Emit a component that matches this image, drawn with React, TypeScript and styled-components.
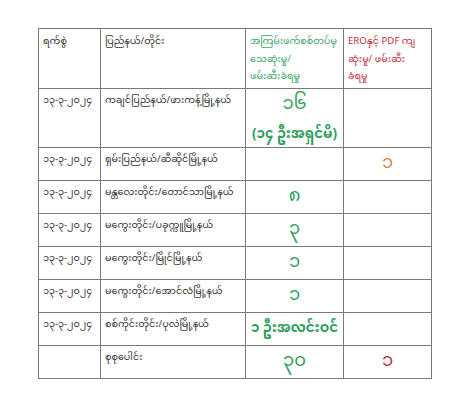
import styled, { createGlobalStyle } from "styled-components";

const GlobalStyle = createGlobalStyle`
  html, body {
    margin: 0;
    padding: 0;
    background: #ffffff;
  }
  body {
    font-family: "Noto Sans Myanmar", "Padauk", "Myanmar Text", "Noto Sans", "DejaVu Sans", sans-serif;
  }
`;

type Row = {
  date: string;
  place: string;
  army?: string;
  armyNote?: string;
  armyBold?: boolean;
  ero?: string;
  eroColor?: string;
  tall?: boolean;
};

const rows: Row[] = [
  {
    date: "၁၃-၃-၂၀၂၄",
    place: "ကချင်ပြည်နယ်/ဖားကန့်မြို့နယ်",
    army: "၁၆",
    armyNote: "(၁၄ ဦးအရှင်မိ)",
    tall: true,
  },
  {
    date: "၁၃-၃-၂၀၂၄",
    place: "ရှမ်းပြည်နယ်/ဆီဆိုင်မြို့နယ်",
    ero: "၁",
    eroColor: "#d98a4a",
  },
  { date: "၁၃-၃-၂၀၂၄", place: "မန္တလေးတိုင်း/တောင်သာမြို့နယ်", army: "၈" },
  { date: "၁၃-၃-၂၀၂၄", place: "မကွေးတိုင်း/ပခုက္ကူမြို့နယ်", army: "၃" },
  { date: "၁၃-၃-၂၀၂၄", place: "မကွေးတိုင်း/မြိုင်မြို့နယ်", army: "၁" },
  { date: "၁၃-၃-၂၀၂၄", place: "မကွေးတိုင်း/အောင်လံမြို့နယ်", army: "၁" },
  {
    date: "၁၃-၃-၂၀၂၄",
    place: "စစ်ကိုင်းတိုင်း/ပုလဲမြို့နယ်",
    army: "၁ ဦးအလင်းဝင်",
    armyBold: true,
  },
  { date: "", place: "စုစုပေါင်း", army: "၃၀", ero: "၁", eroColor: "#c0303c" },
];

const App = () => {
  return (
    <Page>
      <GlobalStyle />
      <Table>
        <colgroup>
          <col style={{ width: 62 }} />
          <col style={{ width: 145 }} />
          <col style={{ width: 98 }} />
          <col style={{ width: 88 }} />
        </colgroup>
        <thead>
          <HeadRow>
            <HeadCell>ရက်စွဲ</HeadCell>
            <HeadCell>ပြည်နယ်/တိုင်း</HeadCell>
            <HeadCell $color="#3aa56a">
              အကြမ်းဖက်စစ်တပ်မှ
              <br />
              သေဆုံးမှု/
              <br />
              ဖမ်းဆီးခံရမှု
            </HeadCell>
            <HeadCell $color="#c0303c">
              EROနှင့် PDF ကျ
              <br />
              ဆုံးမှု/ ဖမ်းဆီး
              <br />
              ခံရမှု
            </HeadCell>
          </HeadRow>
        </thead>
        <tbody>
          {rows.map((r, i) => (
            <BodyRow key={i} $tall={r.tall}>
              <TextCell>{r.date}</TextCell>
              <TextCell>{r.place}</TextCell>
              <ValueCell $tall={r.tall}>
                {r.army && (
                  <ArmyValue $bold={r.armyBold} $tall={r.tall}>
                    {r.army}
                  </ArmyValue>
                )}
                {r.armyNote && <ArmyNote>{r.armyNote}</ArmyNote>}
              </ValueCell>
              <ValueCell>
                {r.ero && <EroValue $color={r.eroColor}>{r.ero}</EroValue>}
              </ValueCell>
            </BodyRow>
          ))}
        </tbody>
      </Table>
    </Page>
  );
};

const Page = styled.div`
  width: 474px;
  height: 412px;
  padding: 28px 0 0 38px;
  box-sizing: border-box;
  background: #ffffff;
`;

const Table = styled.table`
  border-collapse: collapse;
  table-layout: fixed;
  width: 393px;
  color: #333333;
`;

const HeadRow = styled.tr`
  height: 60px;
`;

const HeadCell = styled.th<{ $color?: string }>`
  border: 1px solid #7a7a7a;
  padding: 4px 4px 0 4px;
  text-align: left;
  vertical-align: top;
  font-weight: 400;
  font-size: 9.6px;
  line-height: 17.5px;
  color: ${(p) => p.$color || "#333333"};
  white-space: nowrap;
  overflow: hidden;
`;

const BodyRow = styled.tr<{ $tall?: boolean }>`
  height: ${(p) => (p.$tall ? "59px" : "33px")};
`;

const TextCell = styled.td`
  border: 1px solid #7a7a7a;
  padding: 3px 4px 0 4px;
  vertical-align: top;
  font-size: 9.6px;
  line-height: 17px;
  color: #333333;
  white-space: nowrap;
  overflow: hidden;
`;

const ValueCell = styled.td<{ $tall?: boolean }>`
  border: 1px solid #7a7a7a;
  padding: ${(p) => (p.$tall ? "4px 2px 0 2px" : "0 2px")};
  text-align: center;
  vertical-align: ${(p) => (p.$tall ? "top" : "middle")};
`;

const ArmyValue = styled.div<{ $bold?: boolean; $tall?: boolean }>`
  color: #2e9e5e;
  font-size: ${(p) => (p.$bold ? "13.5px" : "18px")};
  font-weight: ${(p) => (p.$bold ? 700 : 400)};
  line-height: ${(p) => (p.$tall ? "24px" : "28px")};
  white-space: nowrap;
`;

const ArmyNote = styled.div`
  color: #2e9e5e;
  font-size: 13.5px;
  font-weight: 700;
  line-height: 24px;
  margin-top: 6px;
  white-space: nowrap;
`;

const EroValue = styled.div<{ $color?: string }>`
  color: ${(p) => p.$color || "#c0303c"};
  font-size: 18px;
  line-height: 28px;
`;

export default App;
